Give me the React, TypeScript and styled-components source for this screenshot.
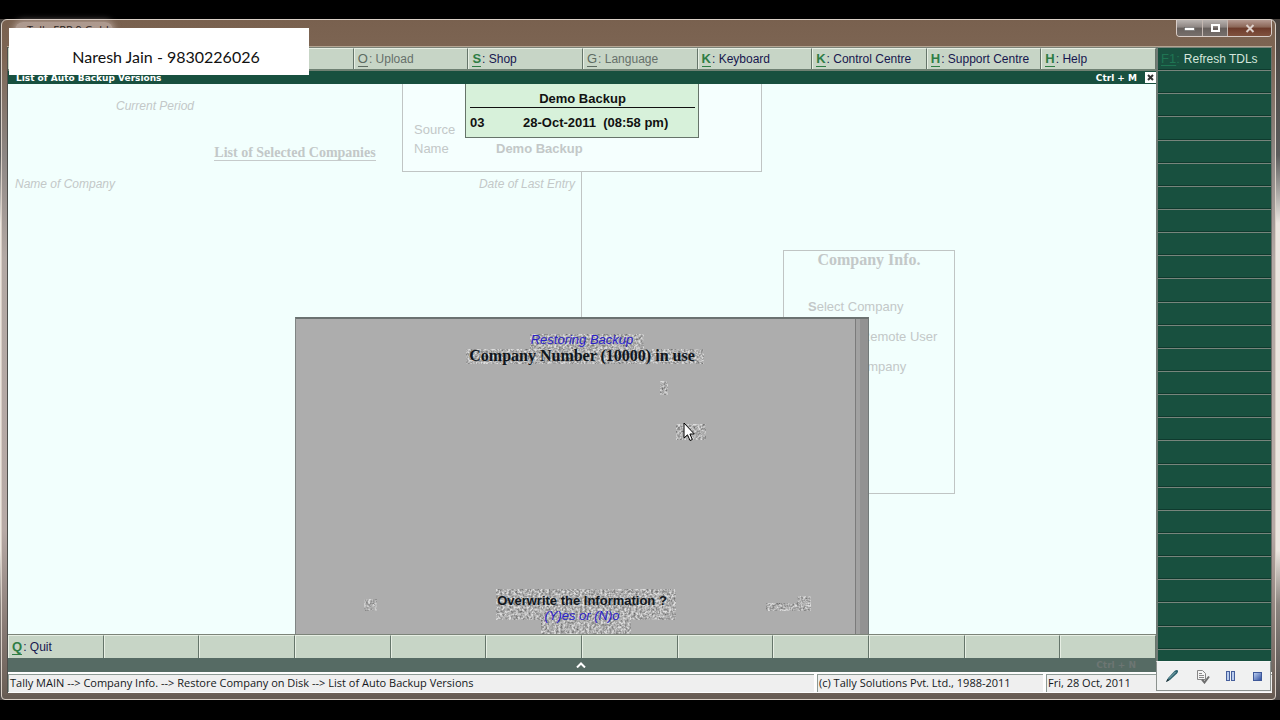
import React from "react";
import styled, { createGlobalStyle } from "styled-components";

const sans = '"Liberation Sans", Arial, sans-serif';
const serif = '"Liberation Serif", "Times New Roman", serif';
const ui = '"Open Sans", "Noto Sans", sans-serif';
const wide = '"DejaVu Sans", Verdana, sans-serif';

const GlobalStyle = createGlobalStyle`
  *, *::before, *::after { box-sizing: border-box; }
  body { margin: 0; background: #000; }
  button { margin: 0; padding: 0; border: 0; background: none; font: inherit; color: inherit; text-align: left; }
  h1, h2, p, ul, dl, dd { margin: 0; padding: 0; }
  ul { list-style: none; }
`;

const Page = styled.div`
  position: relative;
  display: flex;
  min-height: 100vh;
  padding: 19px 0 20px;
  background: #000;
`;

const Backdrop = styled.div`
  flex: 1;
  display: flex;
  padding: 0 4px 0 1px;
  background: linear-gradient(#48423e, #5c5c5c 20%, #ece6e0 30%, #ece6e0 78%, #8c8580 86%, #4f4a48);
`;

const Window = styled.div`
  flex: 1;
  min-width: 0;
  display: flex;
  flex-direction: column;
  border: 1px solid #d9cfc6;
  border-radius: 6px 6px 4px 4px;
  padding: 0 3px 6px 5px;
  background: linear-gradient(#79614f, #7d6553 5%, #8d8784 20%, #b3a9a4 35%, #b7aaa6 75%, #80736c 92%, #695d54);
  box-shadow: inset 0 -5px 0 -1px #675c54;
`;

const TitleBar = styled.header`
  display: flex;
  align-items: flex-start;
  justify-content: space-between;
  height: 27px;
  border-bottom: 1px solid #b5a593;
`;

const Title = styled.h1`
  margin: 2px 0 0 8px;
  padding: 0 4px 0 12px;
  border-radius: 8px;
  background: rgba(225, 210, 205, 0.5);
  box-shadow: 0 0 6px 2px rgba(225, 210, 205, 0.5);
  font: 11px/16px ${ui};
  color: #2a2220;
`;

const WindowControls = styled.div`
  display: flex;
  height: 17px;
  border: 1px solid #d8cdc8;
  border-top: 0;
  border-radius: 0 0 4px 4px;
  overflow: hidden;
`;

const ControlButton = styled.button<{ $close?: boolean }>`
  display: flex;
  align-items: center;
  justify-content: center;
  width: ${(p) => (p.$close ? 44 : 25)}px;
  background: ${(p) =>
    p.$close
      ? "linear-gradient(#b59a91, #8a6556 45%, #6c3a2a 50%, #80523e)"
      : "linear-gradient(#b8b2af, #8d8582 45%, #665f5c 50%, #77706c)"};
  & + & { border-left: 1px solid #c4b8b2; }
`;

const Body = styled.div`
  flex: 1;
  display: flex;
  min-height: 0;
  border-left: 1px solid #4e4f4c;
`;

const Main = styled.main`
  flex: 1;
  min-width: 0;
  display: flex;
  flex-direction: column;
`;

const KeyBar = styled.nav<{ $bottom?: boolean }>`
  display: flex;
  height: 24px;
  padding-left: ${(p) => (p.$bottom ? 0 : 2)}px;
  border-top: 1px solid #7c8479;
  border-bottom: ${(p) => (p.$bottom ? 0 : 2)}px solid #6f8173;
  background: #c7d5c6;
`;

const KeySlot = styled.div`
  flex: 1 1 0;
  min-width: 0;
  display: flex;
  border-left: 1px solid #e7efe4;
  border-top: 1px solid #e7efe4;
  border-right: 1px solid #65756a;
`;

const KeyButton = styled.button<{ $muted?: boolean }>`
  flex: 1;
  padding-left: 3px;
  font: 12px/18px ${sans};
  white-space: nowrap;
  color: ${(p) => (p.$muted ? "#66706a" : "#17174f")};
`;

const HotKey = styled.span<{ $muted?: boolean }>`
  margin-right: 1px;
  font-size: 13px;
  font-weight: ${(p) => (p.$muted ? 400 : 700)};
  color: ${(p) => (p.$muted ? "#5d6b61" : "#2f7d45")};
  border-bottom: 1px solid currentColor;
`;

const ViewBar = styled.div`
  display: flex;
  align-items: center;
  justify-content: space-between;
  height: 13px;
  padding-left: 8px;
  background: #18503f;
  color: #fff;
  font: bold 9px/12px ${wide};
`;

const ViewTools = styled.div`
  display: flex;
  align-items: center;
  gap: 8px;
`;

const CloseView = styled.button`
  display: flex;
  align-items: center;
  justify-content: center;
  width: 11px;
  height: 11px;
  background: #fff;
`;

const Desktop = styled.div`
  position: relative;
  flex: 1;
  display: flex;
  background: #f2fffd;
  color: #c3c8c8;
  font: 13px/16px ${sans};
  overflow: hidden;
`;

const Half = styled.section`
  width: 50%;
`;

const CompaniesHalf = styled(Half)`
  border-right: 1px solid #c0c5c4;
  padding: 14px 6px 0 7px;
`;

const Period = styled.p`
  width: 50%;
  text-align: center;
  font-style: italic;
  font-size: 12px;
`;

const ListTitle = styled.h2`
  margin: 31px auto 0;
  width: max-content;
  font: bold 14px/15px ${serif};
  border-bottom: 1px solid #c6cbcb;
`;

const ColumnHeads = styled.div`
  display: flex;
  justify-content: space-between;
  margin-top: 15px;
  font-style: italic;
  font-size: 12px;
`;

const MenuHalf = styled(Half)`
  display: flex;
  justify-content: center;
  align-items: flex-start;
  padding-top: 166px;
`;

const CompanyMenu = styled.div`
  width: 172px;
  height: 244px;
  border: 1px solid #c0c5c4;
  h2 { font: bold 16px/18px ${serif}; text-align: center; }
  ul { margin: 30px 0 0 24px; display: flex; flex-direction: column; gap: 14px; }
  li { white-space: nowrap; }
`;

const SourcePanel = styled.div`
  position: absolute;
  top: 0;
  left: 50%;
  transform: translateX(-50%);
  width: 360px;
  height: 88px;
  padding: 38px 11px 0;
  border: 1px solid #c0c5c4;
  border-top: 0;
  background: #f5fffe;
`;

const SourceList = styled.dl`
  display: grid;
  grid-template-columns: 82px 1fr;
  row-gap: 3px;
  dd { font-weight: bold; }
`;

const BackupPopup = styled.div`
  position: absolute;
  top: 0;
  left: 50%;
  transform: translateX(-50%);
  width: 234px;
  height: 54px;
  padding: 7px 3px 0 4px;
  border: 1px solid #66746a;
  border-top: 0;
  background: #d7f1da;
  color: #111;
  font: bold 13px/16px ${sans};
  h2 { font: inherit; text-align: center; border-bottom: 1px solid #111; }
`;

const VersionRow = styled.div`
  display: grid;
  grid-template-columns: 53px 1fr;
  margin-top: 7px;
  white-space: pre;
`;

const Dialog = styled.section`
  position: absolute;
  bottom: 0;
  left: 50%;
  transform: translateX(-50%);
  display: flex;
  flex-direction: column;
  justify-content: space-between;
  align-items: center;
  width: 50%;
  height: 317px;
  padding: 13px 0 11px;
  border: 1px solid #727a79;
  border-top: 2px solid #6b7271;
  border-left-color: #808584;
  border-bottom: 0;
  background: #adadad;
  color: #10161c;
  text-align: center;
  &::after {
    content: "";
    position: absolute;
    top: 0;
    right: 0;
    bottom: 0;
    width: 13px;
    border-left: 1px solid #7b7b7b;
    background: linear-gradient(90deg, #a2a2a2 4px, #929292 4px);
  }
`;

const DialogText = styled.div`
  position: relative;
  z-index: 1;
  h2 { font: bold 16px/18px ${serif}; }
`;

const Emphasis = styled.p`
  font: italic 13px/15px ${sans};
  color: #2a20c8;
`;

const Question = styled.p`
  font: bold 13px/15px ${sans};
`;

const Grain = styled.svg<{ $x: number; $y: number }>`
  position: absolute;
  left: calc(50% + ${(p) => p.$x}px);
  top: ${(p) => p.$y}px;
`;

const Pointer = styled.svg`
  position: absolute;
  left: calc(50% + 101px);
  top: 338px;
`;

const Splitter = styled.button`
  display: grid;
  grid-template-columns: 1fr auto 1fr;
  align-items: center;
  flex: 0 0 14px;
  padding-right: 20px;
  background: #566b64;
  color: #6d7673;
  font: bold 9px/12px ${wide};
  svg { grid-column: 2; margin-left: 18px; }
  span { text-align: right; }
`;

const KeyColumn = styled.aside`
  width: 116px;
  display: flex;
  flex-direction: column;
  border-left: 2px solid #6f7a74;
  border-right: 1px solid #6d6f6b;
  background: #18503f;
`;

const SideKey = styled.div`
  flex: 1 1 0;
  display: flex;
  align-items: center;
  padding-left: 3px;
  border-top: 1px solid #77857c;
  border-bottom: 1px solid #0f3a2e;
  color: #d4e6dc;
  font: 12px/16px ${sans};
  white-space: nowrap;
`;

const SideHotKey = styled.span`
  margin-right: 4px;
  font-size: 13px;
  color: #1f7553;
  u { text-underline-offset: 2px; }
`;

const StatusBar = styled.footer`
  display: flex;
  gap: 3px;
  height: 21px;
  padding: 2px 0 1px;
  border-left: 1px solid #4e4f4c;
  background: #fdfdfd;
  font: 11px/16px ${ui};
  color: #141820;
`;

const StatusCell = styled.div<{ $width?: number }>`
  flex: ${(p) => (p.$width ? `0 0 ${p.$width}px` : "1 1 0")};
  min-width: 0;
  padding-left: 1px;
  border-top: 1px solid #8d9a94;
  border-left: 1px solid #8d9a94;
  background: #efefef;
  white-space: nowrap;
  overflow: hidden;
`;

const Caption = styled.p`
  position: absolute;
  top: 28px;
  left: 9px;
  width: 300px;
  height: 47px;
  padding: 18px 0 0 14px;
  background: #fff;
  color: #111;
  font: 16px/22px Lato, sans-serif;
  text-align: center;
`;

const Recorder = styled.div`
  position: absolute;
  right: 9px;
  bottom: 29px;
  display: flex;
  align-items: center;
  justify-content: space-around;
  width: 115px;
  height: 30px;
  border: 1px solid #8b918e;
  border-top-color: #f6f6f6;
  background: #f0f1f1;
  button { display: flex; }
`;

type Key = { hot: string; text: string; muted?: boolean };

const topKeys: (Key | null)[] = [
  null,
  null,
  null,
  { hot: "O", text: "Upload", muted: true },
  { hot: "S", text: "Shop" },
  { hot: "G", text: "Language", muted: true },
  { hot: "K", text: "Keyboard" },
  { hot: "K", text: "Control Centre" },
  { hot: "H", text: "Support Centre" },
  { hot: "H", text: "Help" },
];

const bottomKeys: (Key | null)[] = [{ hot: "Q", text: "Quit" }, ...Array(11).fill(null)];

function Keys({ keys, bottom }: { keys: (Key | null)[]; bottom?: boolean }) {
  return (
    <KeyBar $bottom={bottom} aria-label={bottom ? "Actions" : "Menu"}>
      {keys.map((k, i) => (
        <KeySlot key={i}>
          {k && (
            <KeyButton $muted={k.muted}>
              <HotKey $muted={k.muted}>{k.hot}</HotKey>: {k.text}
            </KeyButton>
          )}
        </KeySlot>
      ))}
    </KeyBar>
  );
}

function GrainPatch({ x, y, w, h, id }: { x: number; y: number; w: number; h: number; id: string }) {
  return (
    <Grain $x={x} $y={y} width={w} height={h} aria-hidden="true">
      <filter id={id} x="0" y="0" width="100%" height="100%" colorInterpolationFilters="sRGB">
        <feTurbulence type="fractalNoise" baseFrequency="0.45" numOctaves="2" seed={w} />
        <feColorMatrix values="1.3 0 0 0 0.05  1.3 0 0 0 0.05  1.3 0 0 0 0.05  0 0 0 0 0.6" />
      </filter>
      <rect width={w} height={h} filter={`url(#${id})`} />
    </Grain>
  );
}

export default function App() {
  return (
    <Page>
      <GlobalStyle />
      <Backdrop>
        <Window>
          <TitleBar>
            <Title>Tally.ERP 9 Gold</Title>
            <WindowControls>
              <ControlButton aria-label="Minimize">
                <svg width="11" height="8"><rect x="0.5" y="3.5" width="10" height="3" fill="#fff" stroke="#555" strokeWidth="0.5" /></svg>
              </ControlButton>
              <ControlButton aria-label="Maximize">
                <svg width="11" height="10"><rect x="2" y="2" width="7" height="6" fill="none" stroke="#fff" strokeWidth="2" /></svg>
              </ControlButton>
              <ControlButton $close aria-label="Close">
                <svg width="10" height="9"><path d="M1.5 1 L8.5 8 M8.5 1 L1.5 8" stroke="#ddd0cb" strokeWidth="2" /></svg>
              </ControlButton>
            </WindowControls>
          </TitleBar>
          <Body>
            <Main>
              <Keys keys={topKeys} />
              <ViewBar>
                <span>List of Auto Backup Versions</span>
                <ViewTools>
                  <span>Ctrl + M</span>
                  <CloseView aria-label="Close view">
                    <svg width="7" height="7"><path d="M1 1 L6 6 M6 1 L1 6" stroke="#333" strokeWidth="2" /></svg>
                  </CloseView>
                </ViewTools>
              </ViewBar>
              <Desktop>
                <CompaniesHalf>
                  <Period>Current Period</Period>
                  <ListTitle>List of Selected Companies</ListTitle>
                  <ColumnHeads>
                    <span>Name of Company</span>
                    <span>Date of Last Entry</span>
                  </ColumnHeads>
                </CompaniesHalf>
                <MenuHalf>
                  <CompanyMenu>
                    <h2>Company Info.</h2>
                    <ul>
                      <li><b>S</b>elect Company</li>
                      <li>Login as Remote User</li>
                      <li>Create Company</li>
                    </ul>
                  </CompanyMenu>
                </MenuHalf>
                <SourcePanel>
                  <SourceList>
                    <dt>Source</dt>
                    <dd />
                    <dt>Name</dt>
                    <dd>Demo Backup</dd>
                  </SourceList>
                </SourcePanel>
                <BackupPopup>
                  <h2>Demo Backup</h2>
                  <VersionRow>
                    <span>03</span>
                    <span>{"28-Oct-2011  (08:58 pm)"}</span>
                  </VersionRow>
                </BackupPopup>
                <Dialog role="dialog" aria-label="Restoring Backup">
                  <GrainPatch id="g1" x={-52} y={15} w={114} h={15} />
                  <GrainPatch id="g2" x={-116} y={30} w={238} h={15} />
                  <GrainPatch id="g3" x={78} y={62} w={8} h={14} />
                  <GrainPatch id="g4" x={94} y={105} w={30} h={16} />
                  <GrainPatch id="g5" x={-86} y={270} w={180} h={31} />
                  <GrainPatch id="g6" x={-41} y={301} w={90} h={14} />
                  <GrainPatch id="g7" x={-218} y={280} w={13} h={12} />
                  <GrainPatch id="g8" x={184} y={284} w={45} h={8} />
                  <GrainPatch id="g9" x={215} y={277} w={14} h={8} />
                  <DialogText>
                    <Emphasis>Restoring Backup</Emphasis>
                    <h2>Company Number (10000) in use</h2>
                  </DialogText>
                  <DialogText>
                    <Question>Overwrite the Information ?</Question>
                    <Emphasis>(Y)es or (N)o</Emphasis>
                  </DialogText>
                </Dialog>
                <Pointer width="12" height="20" viewBox="0 0 12 20" aria-hidden="true">
                  <path d="M1 1 V16 L4.5 12.8 L7 18.5 L9.3 17.5 L6.9 12 H11.3 Z" fill="#fff" stroke="#000" />
                </Pointer>
              </Desktop>
              <Keys keys={bottomKeys} bottom />
              <Splitter aria-label="Expand panel">
                <svg width="10" height="6"><path d="M1 5.5 L5 1.5 L9 5.5" fill="none" stroke="#fff" strokeWidth="2" /></svg>
                <span>Ctrl + N</span>
              </Splitter>
            </Main>
            <KeyColumn>
              <SideKey as="button"><SideHotKey><u>F1</u>:</SideHotKey>Refresh TDLs</SideKey>
              {Array.from({ length: 26 }, (_, i) => <SideKey key={i} />)}
            </KeyColumn>
          </Body>
          <StatusBar>
            <StatusCell>{"Tally MAIN --> Company Info. --> Restore Company on Disk --> List of Auto Backup Versions"}</StatusCell>
            <StatusCell $width={226}>(c) Tally Solutions Pvt. Ltd., 1988-2011</StatusCell>
            <StatusCell $width={226}>Fri, 28 Oct, 2011</StatusCell>
          </StatusBar>
        </Window>
      </Backdrop>
      <Caption>Naresh Jain - 9830226026</Caption>
      <Recorder>
        <button aria-label="Pen">
          <svg width="14" height="14" viewBox="0 0 14 14">
            <path d="M1 13 L3 9 L9.5 2 Q11.5 0.5 13 1.5 Q13.5 3 12 4.5 L5 11 Z" fill="#2f6470" />
            <path d="M4 9.5 L10.5 3" stroke="#8db4ba" />
            <path d="M1 13 L2.5 10 L4 11.5 Z" fill="#1c2d33" />
          </svg>
        </button>
        <button aria-label="Actions">
          <svg width="14" height="15" viewBox="0 0 14 15">
            <path d="M1.5 1.5 H6.5 L9.5 4.5 V10.5 H1.5 Z" fill="#f4f4f4" stroke="#868686" />
            <path d="M3 4.5 H6 M3 6.5 H8 M3 8.5 H8" stroke="#8a8a8a" />
            <path d="M6 10.5 L8.5 13.5 L13 7.5" fill="none" stroke="#6e6e6e" strokeWidth="2" />
          </svg>
        </button>
        <button aria-label="Pause">
          <svg width="10" height="10"><g fill="#b9cdee" stroke="#465f9c"><rect x="0.5" y="0.5" width="3" height="9" /><rect x="5.5" y="0.5" width="3" height="9" /></g></svg>
        </button>
        <button aria-label="Stop">
          <svg width="9" height="9">
            <linearGradient id="stop" x2="1" y2="1"><stop stopColor="#c3d6f6" /><stop offset="1" stopColor="#2a4a9c" /></linearGradient>
            <rect x="0.5" y="0.5" width="8" height="8" fill="url(#stop)" stroke="#3e5899" />
          </svg>
        </button>
      </Recorder>
    </Page>
  );
}
